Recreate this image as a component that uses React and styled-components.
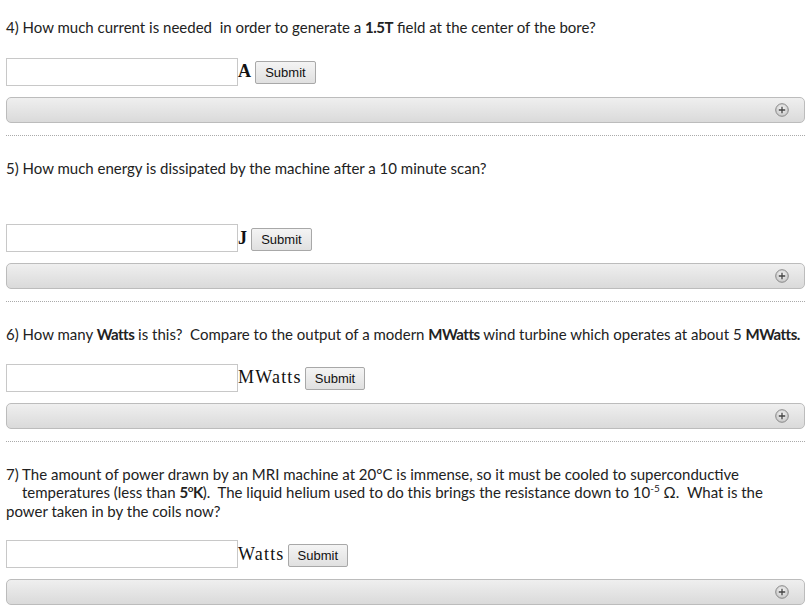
import React from "react";
import styled, { createGlobalStyle } from "styled-components";

const GlobalStyle = createGlobalStyle`
  body {
    margin: 0;
    background: #fff;
    font-family: Lato, "Open Sans", sans-serif;
    color: #222;
  }
`;

const Page = styled.div`
  padding: 18px 6px 0 6px;
`;

const Question = styled.div`
  padding-top: ${p => p.$first ? "0" : "23px"};
`;

const Prompt = styled.p`
  margin: 0;
  font-size: 15px;
  line-height: 18.5px;
  white-space: ${p => p.$nowrap ? "nowrap" : "normal"};
  b { font-weight: 700; letter-spacing: -0.5px; }
  sup { font-size: 10px; line-height: 0; }
`;

const Indent = styled.span`
  display: inline-block;
  width: 16px;
`;

const AnswerRow = styled.div`
  display: flex;
  align-items: center;
  height: 28px;
  margin-top: ${p => p.$gap || 20}px;
`;

const Field = styled.input`
  box-sizing: border-box;
  width: 232px;
  height: 28px;
  border: 1px solid #c8c8c8;
  margin: 0;
  padding: 2px 4px;
  font-size: 14px;
  outline: none;
`;

const Unit = styled.span`
  font-family: "Liberation Serif", "DejaVu Serif", serif;
  font-weight: ${p => p.$bold ? 700 : 400};
  font-size: 18px;
  letter-spacing: 1.2px;
  margin: 0 3px 0 0;
  color: #111;
`;

const SubmitButton = styled.button`
  box-sizing: border-box;
  height: 23px;
  padding: 0 9px;
  font-family: "Liberation Sans", Arial, sans-serif;
  font-size: 13px;
  color: #111;
  background: linear-gradient(#f4f4f4, #e0e0e0);
  border: 1px solid #a8a8a8;
  border-radius: 2px;
  margin-top: 2px;
`;

const Accordion = styled.div`
  box-sizing: border-box;
  margin-top: 11px;
  height: 26px;
  border: 1px solid #bcbcbc;
  border-radius: 5px;
  background: linear-gradient(#efefef, #dadada);
  display: flex;
  align-items: center;
  justify-content: flex-end;
  padding-right: 15px;
`;

const Divider = styled.hr`
  margin: 12px 0 0 0;
  border: none;
  border-top: 1px dotted #aaa;
  height: 0;
`;

function PlusIcon() {
  return (
    <svg width="14" height="14" viewBox="0 0 14 14">
      <defs>
        <radialGradient id="pg" cx="50%" cy="40%" r="60%">
          <stop offset="0%" stopColor="#fafafa" />
          <stop offset="100%" stopColor="#c4c4c4" />
        </radialGradient>
      </defs>
      <circle cx="7" cy="7" r="6.3" fill="url(#pg)" stroke="#8a8a8a" strokeWidth="1" />
      <path d="M7 3.8v6.4M3.8 7h6.4" stroke="#444" strokeWidth="1.3" />
    </svg>
  );
}

function Answer({ unit, bold, gap }) {
  return (
    <>
      <AnswerRow $gap={gap}>
        <Field type="text" />
        <Unit $bold={bold}>{unit}</Unit>
        <SubmitButton>Submit</SubmitButton>
      </AnswerRow>
      <Accordion>
        <PlusIcon />
      </Accordion>
    </>
  );
}

export default function App() {
  return (
    <Page>
      <GlobalStyle />
      <Question $first>
        <Prompt>
          4) How much current is needed&nbsp; in order to generate a <b>1.5T</b> field at the center of the bore?
        </Prompt>
        <Answer unit="A" bold gap={21} />
        <Divider />
      </Question>
      <Question>
        <Prompt>5) How much energy is dissipated by the machine after a 10 minute scan?</Prompt>
        <Answer unit="J" bold gap={47} />
        <Divider />
      </Question>
      <Question>
        <Prompt $nowrap>
          6) How many <b>Watts</b> is this?&nbsp; Compare to the output of a modern <b>MWatts</b> wind turbine which operates at about 5 <b>MWatts.</b>
        </Prompt>
        <Answer unit="MWatts" />
        <Divider />
      </Question>
      <Question>
        <Prompt>
          7) The amount of power drawn by an MRI machine at 20°C is immense, so it must be cooled to superconductive
          <br />
          <Indent />temperatures (less than <b>5<sup>o</sup>K</b>).&nbsp; The liquid helium used to do this brings the resistance down to 10<sup>-5</sup> Ω.&nbsp; What is the
          <br />
          power taken in by the coils now?
        </Prompt>
        <Answer unit="Watts" />
      </Question>
    </Page>
  );
}
